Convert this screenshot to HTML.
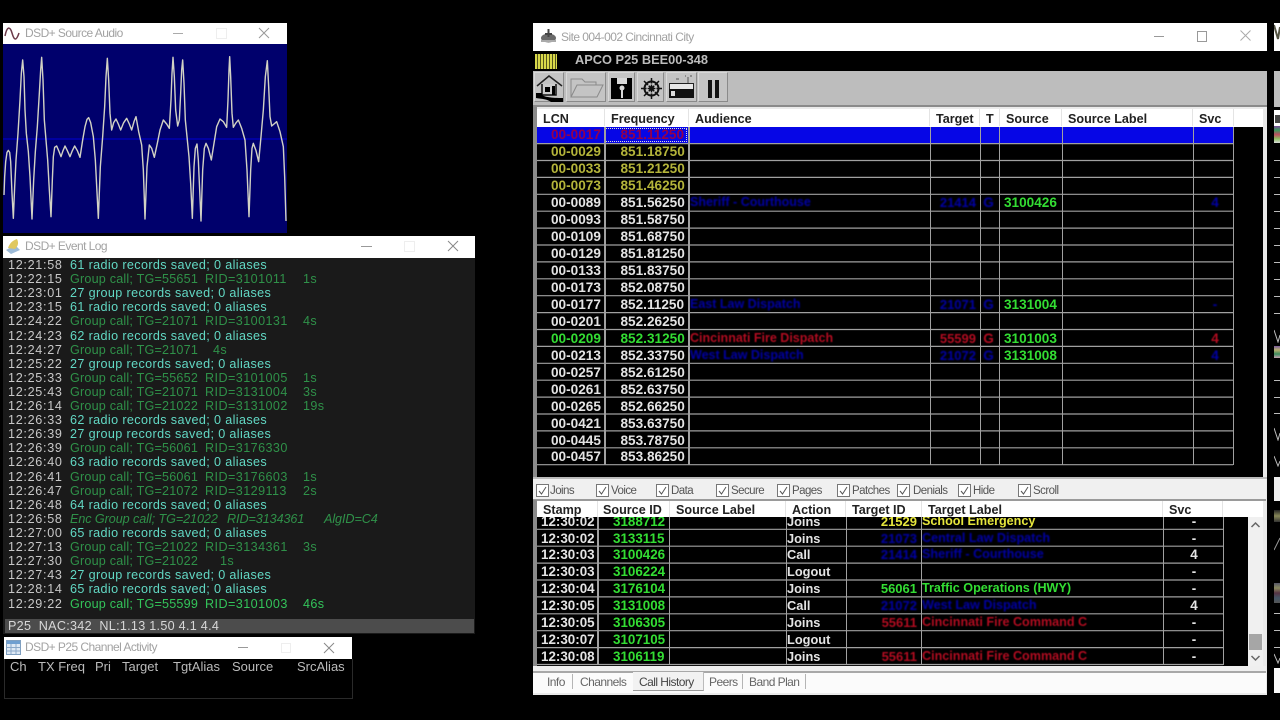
<!DOCTYPE html>
<html><head><meta charset="utf-8"><title>DSD+</title>
<style>
html,body{margin:0;padding:0;background:#000;width:1280px;height:720px;overflow:hidden}
body{position:relative;font-family:"Liberation Sans",sans-serif}
div,span,b,i{position:absolute;white-space:pre}
.tt{color:#a2a2a2;font-size:12px;line-height:16px;letter-spacing:-.55px}
.log{left:0;width:470px;height:14px;font-size:12.6px;line-height:14px;letter-spacing:.37px}
.log b{font-weight:normal;left:8px;color:#c8c8c8;letter-spacing:.7px}
.log i{font-style:normal;left:70px}
.s{color:#62d8c4}.g{color:#2f9149}
.log .q{letter-spacing:.2px}
.log .r{left:205px;letter-spacing:.43px}.log .d{left:303px}
.log .e{font-style:italic;letter-spacing:-.07px}
.hd{font-weight:bold;font-size:12.6px;color:#222;line-height:16px}
.rw{left:537px;width:696px;height:17px;font-weight:bold;font-size:13.6px;line-height:17px;color:#e4e4e4}
.rw span{top:0}
.c1{left:14px}.c2{left:83.5px}.c3{left:153px;font-size:12.5px}.c4{left:401px;width:38px;text-align:right;font-size:13px}.c5{left:445px;width:13px;text-align:center}.c6{left:467px;color:#33dd33}.c7{left:670px;width:16px;text-align:center}
.bl{color:#0000a8;filter:blur(.8px)}.rd{color:#b00c20;filter:blur(.4px)}
.lw{left:537px;width:686px;height:17px;font-weight:bold;font-size:13.4px;line-height:17px;color:#e4e4e4}
.l1{left:4px}.l2{left:76px;color:#33dd33}.l3{left:250px;font-size:12.8px}.l4{left:296px;width:84px;text-align:right;font-size:13px}.l5{left:385px;font-size:12.6px}.l6{left:649px;width:16px;text-align:center}
.ye{color:#e6e63c}.gr{color:#33dd33}
.vl{width:1.4px;background:#a0a0a0}
.cb{top:484px;width:11px;height:11px;border:1px solid #777;background:#fff}
.cb svg{position:absolute;left:1px;top:1px}
.cl{top:483px;font-size:11.5px;line-height:16px;color:#555;letter-spacing:-.55px}
.tb{top:675px;font-size:12px;line-height:15px;color:#666;letter-spacing:-.55px}
.sp{top:674px;width:1px;height:15px;background:#b5b5b5}
.btn{top:72px;height:30px;background:#c4c4c4;border:1px solid;border-color:#d8d8d8 #8a8a8a #8a8a8a #d8d8d8;box-sizing:border-box}
.st{left:1274px;width:6px;height:1px;background:#bbb}
</style></head><body>

<!-- Source Audio -->
<div style="left:3px;top:23px;width:284px;height:21px;background:#fff"></div>
<svg style="position:absolute;left:4px;top:25px" width="17" height="17" viewBox="0 0 17 17"><path d="M1 11C3 1 6 1 8 8S12 17 15 8" fill="none" stroke="#6b3a4a" stroke-width="1.5"/></svg>
<div class="tt" style="left:25px;top:25px">DSD+ Source Audio</div>
<div style="left:173px;top:33px;width:10px;height:1px;background:#aaa"></div>
<div style="left:216px;top:28px;width:9px;height:9px;border:1px solid #eee"></div>
<svg style="position:absolute;left:258px;top:27px" width="12" height="12"><path d="M1 1L11 11M11 1L1 11" stroke="#999" fill="none"/></svg>
<div style="left:3px;top:44px;width:284px;height:189px;background:#00006c"></div>
<div style="left:3px;top:138px;width:284px;height:2px;background:#0000a0"></div>
<svg style="position:absolute;left:0;top:20px" width="290" height="220" viewBox="0 0 870 660"><polyline fill="none" stroke="#d2d2c4" stroke-width="4.2" stroke-linejoin="round" points="12,525 14,470 17,425 21,397 25,391 29,397 32,425 36,520 40,595 44,500 48,420 54,340 60,240 64,160 68,120 72,170 75,270 79,340 85,395 90,470 96,597 101,480 106,395 112,320 118,220 122,150 125,112 129,180 133,300 138,360 143,420 148,510 153,590 157,480 160,410 164,382 170,378 176,392 183,410 189,392 195,378 202,392 210,410 217,392 224,378 232,392 240,412 248,360 255,320 261,298 266,293 272,308 280,350 286,420 295,595 301,440 308,350 314,260 318,170 322,115 326,180 330,280 335,330 341,308 348,297 355,312 362,330 371,308 380,295 388,312 395,330 402,305 408,290 416,335 425,375 430,450 435,597 441,440 448,375 455,385 463,412 472,370 480,330 490,300 500,312 508,325 513,240 516,160 519,112 523,170 527,270 533,318 538,300 542,220 545,150 548,120 552,190 556,300 560,340 567,410 572,490 577,595 582,440 586,385 591,372 595,420 599,510 603,603 608,450 613,385 618,370 625,385 634,420 642,370 650,320 660,297 670,305 680,322 684,240 687,150 689,110 692,170 696,280 700,322 707,310 715,300 725,325 735,360 741,450 747,590 752,450 756,385 760,370 768,392 776,425 783,350 790,270 796,170 802,122 806,200 810,290 815,318 822,312 830,305 840,335 850,380 854,470 858,603"/></svg>

<!-- Event Log -->
<div style="left:3px;top:236px;width:472px;height:398px;background:#1a1a1a"></div>
<div style="left:3px;top:236px;width:472px;height:22px;background:#fff"></div>
<svg style="position:absolute;left:5px;top:238px" width="16" height="17" viewBox="0 0 16 17"><path d="M1 12L10 7L15 12L6 16Z" fill="#9dbbd8"/><path d="M3 10C5 4 9 2 12 1C14 5 13 8 10 11Z" fill="#e0c860"/></svg>
<div class="tt" style="left:25px;top:238px">DSD+ Event Log</div>
<div style="left:361px;top:246px;width:11px;height:1px;background:#999"></div>
<div style="left:404px;top:241px;width:9px;height:9px;border:1px solid #eee"></div>
<svg style="position:absolute;left:447px;top:240px" width="12" height="12"><path d="M1 1L11 11M11 1L1 11" stroke="#888" fill="none"/></svg>

<div class="log" style="top:258px"><b>12:21:58</b><i class="s">61 radio records saved; 0 aliases</i></div>
<div class="log" style="top:272px"><b>12:22:15</b><i class="g q">Group call; TG=55651</i><i class="g r">RID=3101011</i><i class="g d">1s</i></div>
<div class="log" style="top:286px"><b>12:23:01</b><i class="s">27 group records saved; 0 aliases</i></div>
<div class="log" style="top:300px"><b>12:23:15</b><i class="s">61 radio records saved; 0 aliases</i></div>
<div class="log" style="top:314px"><b>12:24:22</b><i class="g q">Group call; TG=21071</i><i class="g r">RID=3100131</i><i class="g d">4s</i></div>
<div class="log" style="top:329px"><b>12:24:23</b><i class="s">62 radio records saved; 0 aliases</i></div>
<div class="log" style="top:343px"><b>12:24:27</b><i class="g q">Group call; TG=21071</i><i class="g" style="left:213px">4s</i></div>
<div class="log" style="top:357px"><b>12:25:22</b><i class="s">27 group records saved; 0 aliases</i></div>
<div class="log" style="top:371px"><b>12:25:33</b><i class="g q">Group call; TG=55652</i><i class="g r">RID=3101005</i><i class="g d">1s</i></div>
<div class="log" style="top:385px"><b>12:25:43</b><i class="g q">Group call; TG=21071</i><i class="g r">RID=3131004</i><i class="g d">3s</i></div>
<div class="log" style="top:399px"><b>12:26:14</b><i class="g q">Group call; TG=21022</i><i class="g r">RID=3131002</i><i class="g d">19s</i></div>
<div class="log" style="top:413px"><b>12:26:33</b><i class="s">62 radio records saved; 0 aliases</i></div>
<div class="log" style="top:427px"><b>12:26:39</b><i class="s">27 group records saved; 0 aliases</i></div>
<div class="log" style="top:441px"><b>12:26:39</b><i class="g q">Group call; TG=56061</i><i class="g r">RID=3176330</i></div>
<div class="log" style="top:455px"><b>12:26:40</b><i class="s">63 radio records saved; 0 aliases</i></div>
<div class="log" style="top:470px"><b>12:26:41</b><i class="g q">Group call; TG=56061</i><i class="g r">RID=3176603</i><i class="g d">1s</i></div>
<div class="log" style="top:484px"><b>12:26:47</b><i class="g q">Group call; TG=21072</i><i class="g r">RID=3129113</i><i class="g d">2s</i></div>
<div class="log" style="top:498px"><b>12:26:48</b><i class="s">64 radio records saved; 0 aliases</i></div>
<div class="log" style="top:512px"><b>12:26:58</b><i class="g e">Enc Group call; TG=21022</i><i class="g e" style="left:227px">RID=3134361</i><i class="g e" style="left:324px">AlgID=C4</i></div>
<div class="log" style="top:526px"><b>12:27:00</b><i class="s">65 radio records saved; 0 aliases</i></div>
<div class="log" style="top:540px"><b>12:27:13</b><i class="g q">Group call; TG=21022</i><i class="g r">RID=3134361</i><i class="g d">3s</i></div>
<div class="log" style="top:554px"><b>12:27:30</b><i class="g q">Group call; TG=21022</i><i class="g" style="left:220px">1s</i></div>
<div class="log" style="top:568px"><b>12:27:43</b><i class="s">27 group records saved; 0 aliases</i></div>
<div class="log" style="top:582px"><b>12:28:14</b><i class="s">65 radio records saved; 0 aliases</i></div>
<div class="log" style="top:597px"><b>12:29:22</b><i class="q" style="color:#33c45a">Group call; TG=55599</i><i class="r" style="color:#33c45a">RID=3101003</i><i class="d" style="color:#33c45a">46s</i></div>
<div style="left:5px;top:619px;width:469px;height:14px;background:#4c4c4c"></div>
<div style="left:8px;top:619px;font-size:12.6px;line-height:14px;letter-spacing:.28px;color:#d8d8d8">P25  NAC:342  NL:1.13 1.50 4.1 4.4</div>

<!-- Channel Activity -->
<div style="left:4px;top:637px;width:348px;height:22px;background:#fff"></div>
<div style="left:4px;top:659px;width:347px;height:39px;background:#000;border:1px solid #2a2a2a;border-top:0"></div>
<svg style="position:absolute;left:6px;top:640px" width="15" height="15" viewBox="0 0 15 15"><rect x=".5" y=".5" width="14" height="14" fill="#dde8f4" stroke="#7f9fc0"/><rect x="1" y="1" width="13" height="3" fill="#6f9fd0"/><path d="M1 7.500H14M1 11H14M5 4V14M10 4V14" stroke="#8aa8c8"/></svg>
<div class="tt" style="left:25px;top:639px">DSD+ P25 Channel Activity</div>
<div style="left:238px;top:647px;width:10px;height:1px;background:#999"></div>
<div style="left:281px;top:643px;width:8px;height:8px;border:1px solid #eee"></div>
<svg style="position:absolute;left:323px;top:642px" width="12" height="12"><path d="M1 1L11 11M11 1L1 11" stroke="#888" fill="none"/></svg>
<div style="left:10px;top:659px;font-size:13px;line-height:16px;color:#bbb">Ch</div>
<div style="left:38px;top:659px;font-size:13px;line-height:16px;color:#bbb">TX Freq</div>
<div style="left:95px;top:659px;font-size:13px;line-height:16px;color:#bbb">Pri</div>
<div style="left:122px;top:659px;font-size:13px;line-height:16px;color:#bbb">Target</div>
<div style="left:173px;top:659px;font-size:13px;line-height:16px;color:#bbb">TgtAlias</div>
<div style="left:232px;top:659px;font-size:13px;line-height:16px;color:#bbb">Source</div>
<div style="left:297px;top:659px;font-size:13px;line-height:16px;color:#bbb">SrcAlias</div>

<!-- Main window -->
<div style="left:533px;top:23px;width:734px;height:28px;background:#fff"></div>
<svg style="position:absolute;left:540px;top:28px" width="17" height="16" viewBox="0 0 17 16"><ellipse cx="8.500" cy="10" rx="7.500" ry="4.500" fill="#6a6a6a"/><path d="M8.500 1V9M5 6H12" stroke="#444" stroke-width="2"/><rect x="1" y="12" width="15" height="2" fill="#aaa"/></svg>
<div class="tt" style="left:561px;top:29px">Site 004-002 Cincinnati City</div>
<div style="left:1154px;top:36px;width:10px;height:1px;background:#999"></div>
<div style="left:1197px;top:31px;width:8px;height:9px;border:1px solid #999"></div>
<svg style="position:absolute;left:1240px;top:30px" width="11" height="11"><path d="M.5 .5L10.500 10.500M10.500 .5L.5 10.500" stroke="#aaa" fill="none"/></svg>
<div style="left:533px;top:51px;width:734px;height:20px;background:#000"></div>
<div style="left:535px;top:54px;width:22px;height:15px;background:repeating-linear-gradient(90deg,#d8d84a 0 2px,#55551c 2px 3px)"></div>
<div style="left:575px;top:51px;font-weight:bold;font-size:12.8px;line-height:17px;color:#bdbdbd">APCO P25 BEE00-348</div>
<div style="left:533px;top:71px;width:734px;height:36px;background:#bdbdbd;border-bottom:2px solid #8a8a8a;box-sizing:border-box"></div>

<div class="btn" style="left:534px;width:30px"></div>
<svg style="position:absolute;left:535px;top:73px" width="29" height="29" viewBox="0 0 29 29"><path d="M2 13L14 3L27 13" fill="none" stroke="#222" stroke-width="1.5"/><path d="M7 11V22H21V11" fill="#ccc" stroke="#111" stroke-width="1.5"/><rect x="10" y="14" width="5" height="5" fill="#000"/><rect x="17" y="13" width="3" height="9" fill="#000"/><path d="M1 20H7V22C10 24 16 25 28 25V29H16C12 26 7 26 1 25Z" fill="#000"/></svg>
<div class="btn" style="left:566px;width:40px"></div>
<svg style="position:absolute;left:568px;top:76px" width="36" height="24" viewBox="0 0 36 24"><path d="M3 21V3H14L17 6H28V9" fill="none" stroke="#8a8a8a"/><path d="M3 21L9 9H35L29 21Z" fill="none" stroke="#8a8a8a"/></svg>
<div class="btn" style="left:608px;width:27px"></div>
<svg style="position:absolute;left:611px;top:78px" width="22" height="21" viewBox="0 0 22 21"><path d="M0 0H21V21H0Z" fill="#000"/><rect x="6" y="0" width="10" height="6" fill="#d8d8d8"/><circle cx="11" cy="10" r="2.500" fill="#d8d8d8"/><rect x="10" y="10" width="2" height="10" fill="#d8d8d8"/></svg>
<div class="btn" style="left:637px;width:27px"></div>
<svg style="position:absolute;left:641px;top:78px" width="21" height="21" viewBox="0 0 21 21"><circle cx="10.500" cy="10.500" r="7" fill="none" stroke="#111" stroke-width="2"/><circle cx="10.500" cy="10.500" r="2.500" fill="#111"/><path d="M10.500 0V21M0 10.500H21M3 3L18 18M18 3L3 18" stroke="#111" stroke-width="1.5"/><circle cx="10.500" cy="10.500" r="4.500" fill="none" stroke="#ccc"/></svg>
<div class="btn" style="left:666px;width:31px"></div>
<svg style="position:absolute;left:668px;top:74px" width="27" height="26" viewBox="0 0 27 26"><path d="M1.500 9.500H25.500V23.500H1.500Z" fill="#e8e8e8" stroke="#222"/><rect x="1" y="15" width="25" height="9" fill="#111"/><rect x="3" y="17" width="4" height="5" fill="#ddd"/><path d="M20 9L20 3M17 2H18M22 2H24M8 5H11" stroke="#555"/></svg>
<div class="btn" style="left:698px;width:30px"></div>
<div style="left:708px;top:80px;width:4px;height:18px;background:#111"></div>
<div style="left:715px;top:80px;width:4px;height:18px;background:#111"></div>

<div style="left:533px;top:107px;width:734px;height:588px;background:#eaeaea"></div>
<div style="left:533px;top:107px;width:4px;height:371px;background:#8a8a8a"></div>
<div style="left:537px;top:126px;width:726px;height:351px;background:#000"></div>
<div style="left:1263px;top:109px;width:3px;height:369px;background:#e8e8e8"></div>
<div style="left:537px;top:126.7px;width:696px;height:17px;background:#0606e6"></div>
<div style="left:605px;top:128px;width:82px;height:14px;border:1px dotted #ddd;box-sizing:border-box"></div>
<svg style="position:absolute;left:0;top:0" width="1280" height="720"><path fill="none" stroke="#a0a0a0" stroke-width="1.2" d="M537 143.600H1233M537 160.500H1233M537 177.400H1233M537 194.300H1233M537 211.200H1233M537 228.100H1233M537 245H1233M537 261.900H1233M537 278.800H1233M537 295.700H1233M537 312.600H1233M537 329.500H1233M537 346.400H1233M537 363.300H1233M537 380.200H1233M537 397.100H1233M537 414H1233M537 430.900H1233M537 447.800H1233M537 464.700H1233"/></svg>
<div class="vl" style="left:604.3px;top:126px;height:339px"></div>
<div class="vl" style="left:688.3px;top:126px;height:339px"></div>
<div class="vl" style="left:929.5px;top:126px;height:339px"></div>
<div class="vl" style="left:979.5px;top:126px;height:339px"></div>
<div class="vl" style="left:999px;top:126px;height:339px"></div>
<div class="vl" style="left:1061.5px;top:126px;height:339px"></div>
<div class="vl" style="left:1192.5px;top:126px;height:339px"></div>
<div class="vl" style="left:1232.5px;top:126px;height:339px"></div>
<div style="left:537px;top:109px;width:726px;height:17.7px;background:#fff"></div>
<div style="left:604px;top:109px;width:1px;height:17px;background:#e4e4e4"></div>
<div style="left:688px;top:109px;width:1px;height:17px;background:#e4e4e4"></div>
<div style="left:929px;top:109px;width:1px;height:17px;background:#e4e4e4"></div>
<div style="left:979px;top:109px;width:1px;height:17px;background:#e4e4e4"></div>
<div style="left:999px;top:109px;width:1px;height:17px;background:#e4e4e4"></div>
<div style="left:1061px;top:109px;width:1px;height:17px;background:#e4e4e4"></div>
<div style="left:1192px;top:109px;width:1px;height:17px;background:#e4e4e4"></div>
<div style="left:1233px;top:109px;width:1px;height:17px;background:#e4e4e4"></div>
<div class="hd" style="left:543px;top:111px">LCN</div>
<div class="hd" style="left:611px;top:111px">Frequency</div>
<div class="hd" style="left:695px;top:111px">Audience</div>
<div class="hd" style="left:936px;top:111px">Target</div>
<div class="hd" style="left:986px;top:111px">T</div>
<div class="hd" style="left:1006px;top:111px">Source</div>
<div class="hd" style="left:1068px;top:111px">Source Label</div>
<div class="hd" style="left:1199px;top:111px">Svc</div>

<div class="rw" style="top:126px;color:#94004c"><span class="c1">00-0017</span><span class="c2">851.11250</span></div>
<div class="rw" style="top:143px;color:#b4b43a"><span class="c1">00-0029</span><span class="c2">851.18750</span></div>
<div class="rw" style="top:160px;color:#b4b43a"><span class="c1">00-0033</span><span class="c2">851.21250</span></div>
<div class="rw" style="top:177px;color:#b4b43a"><span class="c1">00-0073</span><span class="c2">851.46250</span></div>
<div class="rw" style="top:194px"><span class="c1">00-0089</span><span class="c2">851.56250</span><span class="c3 bl">Sheriff - Courthouse</span><span class="c4 bl">21414</span><span class="c5 bl">G</span><span class="c6">3100426</span><span class="c7 bl">4</span></div>
<div class="rw" style="top:211px"><span class="c1">00-0093</span><span class="c2">851.58750</span></div>
<div class="rw" style="top:228px"><span class="c1">00-0109</span><span class="c2">851.68750</span></div>
<div class="rw" style="top:245px"><span class="c1">00-0129</span><span class="c2">851.81250</span></div>
<div class="rw" style="top:262px"><span class="c1">00-0133</span><span class="c2">851.83750</span></div>
<div class="rw" style="top:279px"><span class="c1">00-0173</span><span class="c2">852.08750</span></div>
<div class="rw" style="top:296px"><span class="c1">00-0177</span><span class="c2">852.11250</span><span class="c3 bl">East Law Dispatch</span><span class="c4 bl">21071</span><span class="c5 bl">G</span><span class="c6">3131004</span><span class="c7 bl">-</span></div>
<div class="rw" style="top:313px"><span class="c1">00-0201</span><span class="c2">852.26250</span></div>
<div class="rw" style="top:330px;color:#33dd33"><span class="c1">00-0209</span><span class="c2">852.31250</span><span class="c3 rd">Cincinnati Fire Dispatch</span><span class="c4 rd">55599</span><span class="c5 rd">G</span><span class="c6">3101003</span><span class="c7 rd">4</span></div>
<div class="rw" style="top:346.5px"><span class="c1">00-0213</span><span class="c2">852.33750</span><span class="c3 bl">West Law Dispatch</span><span class="c4 bl">21072</span><span class="c5 bl">G</span><span class="c6">3131008</span><span class="c7 bl">4</span></div>
<div class="rw" style="top:363.5px"><span class="c1">00-0257</span><span class="c2">852.61250</span></div>
<div class="rw" style="top:380.5px"><span class="c1">00-0261</span><span class="c2">852.63750</span></div>
<div class="rw" style="top:397.5px"><span class="c1">00-0265</span><span class="c2">852.66250</span></div>
<div class="rw" style="top:414.5px"><span class="c1">00-0421</span><span class="c2">853.63750</span></div>
<div class="rw" style="top:431.5px"><span class="c1">00-0445</span><span class="c2">853.78750</span></div>
<div class="rw" style="top:448px"><span class="c1">00-0457</span><span class="c2">853.86250</span></div>

<!-- checkbox strip -->
<div style="left:533px;top:477px;width:734px;height:2px;background:#bcbcbc"></div>
<div style="left:533px;top:479px;width:733px;height:22px;background:#f0f0f0"></div>
<div class="cb" style="left:536px"><svg width="9" height="9"><path d="M1 5L3.500 8L8 1" fill="none" stroke="#555"/></svg></div><div class="cl" style="left:550px">Joins</div>
<div class="cb" style="left:596px"><svg width="9" height="9"><path d="M1 5L3.500 8L8 1" fill="none" stroke="#555"/></svg></div><div class="cl" style="left:611px">Voice</div>
<div class="cb" style="left:656px"><svg width="9" height="9"><path d="M1 5L3.500 8L8 1" fill="none" stroke="#555"/></svg></div><div class="cl" style="left:671px">Data</div>
<div class="cb" style="left:716px"><svg width="9" height="9"><path d="M1 5L3.500 8L8 1" fill="none" stroke="#555"/></svg></div><div class="cl" style="left:731px">Secure</div>
<div class="cb" style="left:777px"><svg width="9" height="9"><path d="M1 5L3.500 8L8 1" fill="none" stroke="#555"/></svg></div><div class="cl" style="left:792px">Pages</div>
<div class="cb" style="left:837px"><svg width="9" height="9"><path d="M1 5L3.500 8L8 1" fill="none" stroke="#555"/></svg></div><div class="cl" style="left:852px">Patches</div>
<div class="cb" style="left:897px"><svg width="9" height="9"><path d="M1 5L3.500 8L8 1" fill="none" stroke="#555"/></svg></div><div class="cl" style="left:913px">Denials</div>
<div class="cb" style="left:958px"><svg width="9" height="9"><path d="M1 5L3.500 8L8 1" fill="none" stroke="#555"/></svg></div><div class="cl" style="left:973px">Hide</div>
<div class="cb" style="left:1018px"><svg width="9" height="9"><path d="M1 5L3.500 8L8 1" fill="none" stroke="#555"/></svg></div><div class="cl" style="left:1033px">Scroll</div>

<!-- lower table -->
<div style="left:533px;top:499px;width:733px;height:1.5px;background:#9a9a9a"></div>
<div style="left:533px;top:500px;width:4px;height:167px;background:#8a8a8a"></div>
<div style="left:537px;top:517px;width:711px;height:149px;background:#000"></div>
<div style="left:1248px;top:517px;width:15px;height:149px;background:#f0f0f0"></div>
<div style="left:1249px;top:634px;width:13px;height:16px;background:#a6a6a6"></div>
<svg style="position:absolute;left:1250px;top:521px" width="11" height="8"><path d="M1.500 6L5.500 2L9.500 6" fill="none" stroke="#666" stroke-width="1.5"/></svg>
<svg style="position:absolute;left:1250px;top:654px" width="11" height="8"><path d="M1.500 2L5.500 6L9.500 2" fill="none" stroke="#666" stroke-width="1.5"/></svg>
<svg style="position:absolute;left:0;top:0" width="1280" height="720"><path fill="none" stroke="#a0a0a0" stroke-width="1.2" d="M537 529.300H1223M537 546.200H1223M537 563.100H1223M537 580H1223M537 596.900H1223M537 613.800H1223M537 630.700H1223M537 647.600H1223M537 664.500H1223"/></svg>

<div class="lw" style="top:512.5px"><span class="l1">12:30:02</span><span class="l2">3188712</span><span class="l3">Joins</span><span class="l4 ye">21529</span><span class="l5 ye">School Emergency</span><span class="l6">-</span></div>
<div class="lw" style="top:529.5px"><span class="l1">12:30:02</span><span class="l2">3133115</span><span class="l3">Joins</span><span class="l4 bl">21073</span><span class="l5 bl">Central Law Dispatch</span><span class="l6">-</span></div>
<div class="lw" style="top:546px"><span class="l1">12:30:03</span><span class="l2">3100426</span><span class="l3">Call</span><span class="l4 bl">21414</span><span class="l5 bl">Sheriff - Courthouse</span><span class="l6">4</span></div>
<div class="lw" style="top:563px"><span class="l1">12:30:03</span><span class="l2">3106224</span><span class="l3">Logout</span><span class="l6">-</span></div>
<div class="lw" style="top:580px"><span class="l1">12:30:04</span><span class="l2">3176104</span><span class="l3">Joins</span><span class="l4 gr">56061</span><span class="l5 gr">Traffic Operations (HWY)</span><span class="l6">-</span></div>
<div class="lw" style="top:597px"><span class="l1">12:30:05</span><span class="l2">3131008</span><span class="l3">Call</span><span class="l4 bl">21072</span><span class="l5 bl">West Law Dispatch</span><span class="l6">4</span></div>
<div class="lw" style="top:614px"><span class="l1">12:30:05</span><span class="l2">3106305</span><span class="l3">Joins</span><span class="l4 rd">55611</span><span class="l5 rd">Cincinnati Fire Command C</span><span class="l6">-</span></div>
<div class="lw" style="top:631px"><span class="l1">12:30:07</span><span class="l2">3107105</span><span class="l3">Logout</span><span class="l6">-</span></div>
<div class="lw" style="top:648px"><span class="l1">12:30:08</span><span class="l2">3106119</span><span class="l3">Joins</span><span class="l4 rd">55611</span><span class="l5 rd">Cincinnati Fire Command C</span><span class="l6">-</span></div>

<div class="vl" style="left:597.3px;top:517px;height:148px"></div>
<div class="vl" style="left:669px;top:517px;height:148px"></div>
<div class="vl" style="left:785.5px;top:517px;height:148px"></div>
<div class="vl" style="left:845.5px;top:517px;height:148px"></div>
<div class="vl" style="left:921px;top:517px;height:148px"></div>
<div class="vl" style="left:1162.5px;top:517px;height:148px"></div>
<div class="vl" style="left:1222.5px;top:517px;height:148px"></div>

<div style="left:537px;top:500.5px;width:726px;height:16.5px;background:#fff"></div>
<div style="left:597px;top:501px;width:1px;height:16px;background:#e4e4e4"></div>
<div style="left:669px;top:501px;width:1px;height:16px;background:#e4e4e4"></div>
<div style="left:785px;top:501px;width:1px;height:16px;background:#e4e4e4"></div>
<div style="left:845px;top:501px;width:1px;height:16px;background:#e4e4e4"></div>
<div style="left:921px;top:501px;width:1px;height:16px;background:#e4e4e4"></div>
<div style="left:1162px;top:501px;width:1px;height:16px;background:#e4e4e4"></div>
<div style="left:1222px;top:501px;width:1px;height:16px;background:#e4e4e4"></div>
<div class="hd" style="left:543px;top:502px">Stamp</div>
<div class="hd" style="left:603px;top:502px">Source ID</div>
<div class="hd" style="left:676px;top:502px">Source Label</div>
<div class="hd" style="left:792px;top:502px">Action</div>
<div class="hd" style="left:852px;top:502px">Target ID</div>
<div class="hd" style="left:928px;top:502px">Target Label</div>
<div class="hd" style="left:1169px;top:502px">Svc</div>

<!-- tabs -->
<div style="left:533px;top:666px;width:733px;height:6px;background:#efefef"></div>
<div style="left:533px;top:671px;width:733px;height:1.5px;background:#a8a8a8"></div>
<div style="left:533px;top:672.5px;width:733px;height:20.5px;background:#fbfbfb"></div>
<div style="left:633px;top:672px;width:70px;height:18px;background:#f2f2f2;border-bottom:1.5px solid #999;border-right:1px solid #bbb"></div>
<div class="tb" style="left:547px">Info</div><div class="sp" style="left:572px"></div>
<div class="tb" style="left:580px">Channels</div>
<div class="tb" style="left:639px;color:#444">Call History</div>
<div class="tb" style="left:709px">Peers</div><div class="sp" style="left:742px"></div>
<div class="tb" style="left:749px">Band Plan</div><div class="sp" style="left:805px"></div>

<!-- right-hand neighbour window sliver -->
<div style="left:1274px;top:23px;width:6px;height:28px;background:#fff"></div>
<svg style="position:absolute;left:1274px;top:23px" width="6" height="20"><path d="M0 2L4 16L6 4" fill="none" stroke="#554" stroke-width="2"/></svg>
<div style="left:1274px;top:71px;width:6px;height:36px;background:#bdbdbd"></div>
<div style="left:1274px;top:110px;width:6px;height:16px;background:#fff"></div>
<div style="left:1275px;top:115px;width:5px;height:8px;background:#444"></div>
<div style="left:1274px;top:126px;width:6px;height:17px;background:linear-gradient(180deg,#7c4c9c,#3c9c5c,#c04c60,#8cc060,#ddd)"></div>
<div class="st" style="top:160px"></div><div class="st" style="top:177px"></div><div class="st" style="top:194px"></div><div class="st" style="top:211px"></div><div class="st" style="top:228px"></div><div class="st" style="top:245px"></div><div class="st" style="top:262px"></div><div class="st" style="top:279px"></div><div class="st" style="top:296px"></div><div class="st" style="top:313px"></div>
<svg style="position:absolute;left:1274px;top:329px" width="6" height="14"><path d="M0 1L4 13L6 6" fill="none" stroke="#bbb"/></svg>
<div style="left:1274px;top:346px;width:6px;height:12px;background:linear-gradient(180deg,#7c5c9c,#b8b070,#3c8c5c,#c8a0b0)"></div>
<div class="st" style="top:380px"></div><div class="st" style="top:397px"></div><div class="st" style="top:413px"></div>
<svg style="position:absolute;left:1274px;top:427px" width="6" height="14"><path d="M0 1L4 13L6 6" fill="none" stroke="#bbb"/></svg>
<svg style="position:absolute;left:1274px;top:455px" width="6" height="12"><path d="M0 1L4 11L6 6" fill="none" stroke="#bbb"/></svg>
<div style="left:1274px;top:477px;width:6px;height:24px;background:#eee"></div>
<div style="left:1274px;top:510px;width:6px;height:12px;background:linear-gradient(180deg,#222,#888858,#333)"></div>
<svg style="position:absolute;left:1274px;top:537px" width="6" height="14"><path d="M0 13L6 1" fill="none" stroke="#999"/></svg>
<div style="left:1274px;top:583px;width:6px;height:20px;background:linear-gradient(180deg,#556,#8a8a60,#534,#456,#555)"></div>
<div class="st" style="top:613px"></div><div class="st" style="top:630px"></div><div class="st" style="top:647px"></div>
<svg style="position:absolute;left:1274px;top:653px" width="6" height="11"><path d="M0 1L4 10L6 5" fill="none" stroke="#bbb"/></svg>
<div style="left:1274px;top:668px;width:6px;height:25px;background:#fafafa"></div>
</body></html>
